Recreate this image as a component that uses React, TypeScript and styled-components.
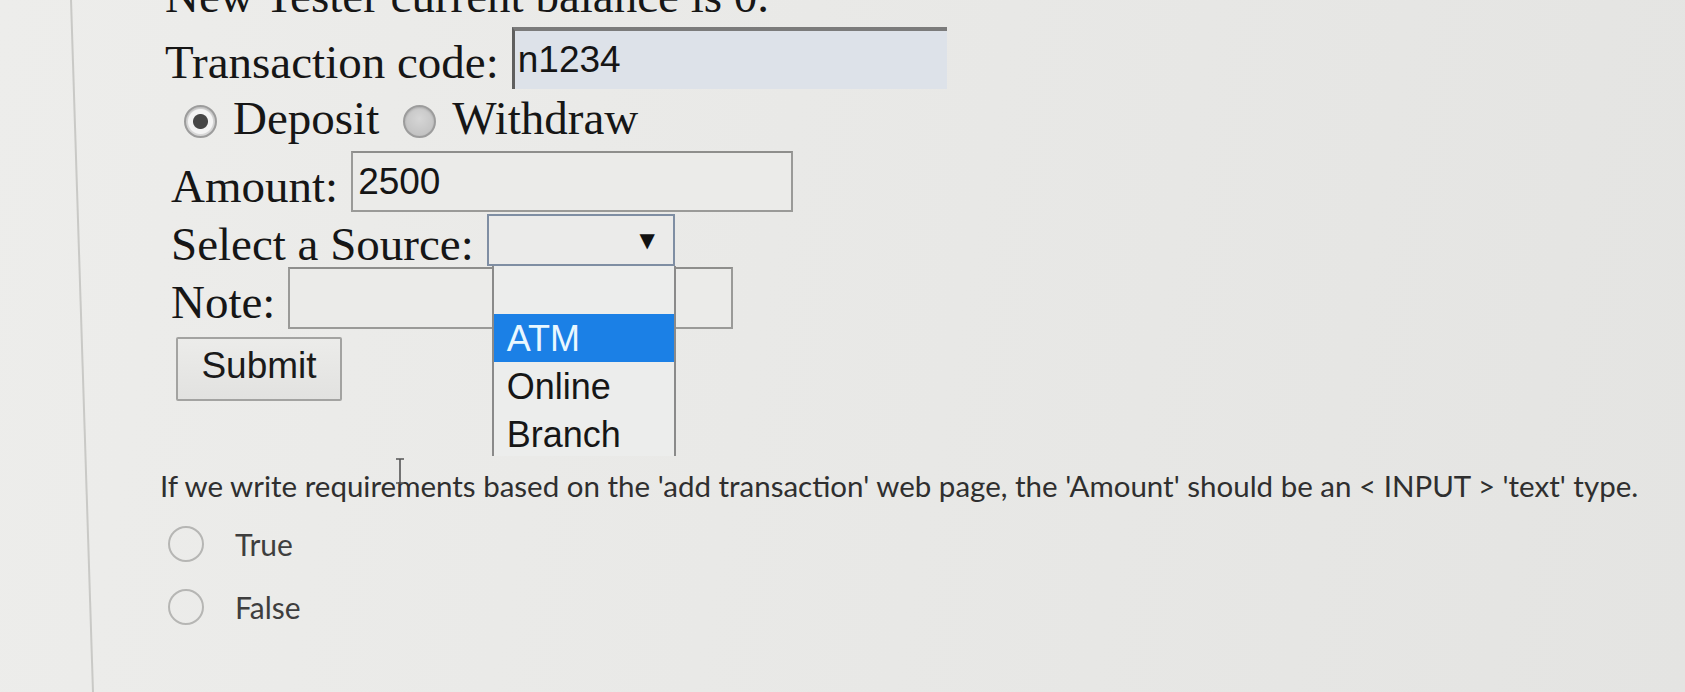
import React from "react";
import styled, { createGlobalStyle } from "styled-components";

const GlobalStyle = createGlobalStyle`
  html, body {
    margin: 0;
    padding: 0;
    width: 1685px;
    height: 692px;
    overflow: hidden;
    background: #e9e9e7;
  }
  * { box-sizing: border-box; }
`;

const Screen = styled.div`
  position: relative;
  display: flex;
  width: 1685px;
  height: 692px;
  overflow: hidden;
  background: linear-gradient(100deg, #ededeb 0%, #e9e9e7 45%, #e4e4e2 100%);

  /* the bezel edge of the photographed page, slightly slanted */
  &::after {
    content: "";
    position: absolute;
    left: 70px;
    top: 0;
    width: 2px;
    height: 700px;
    background: #c9c9c6;
    transform-origin: top left;
    transform: rotate(-1.82deg);
  }
`;

const Gutter = styled.div`
  width: 73px;
  flex-shrink: 0;
`;

const Main = styled.div`
  flex: 1;
  padding-left: 87px;
  display: flex;
  flex-direction: column;
`;

const Shot = styled.div`
  display: flex;
  flex-direction: column;
  padding-left: 5px;
  font-family: "Liberation Serif", "Times New Roman", serif;
  font-size: 47px;
  color: #161616;
`;

const Row = styled.div<{ $top: number; $height: number; $indent?: number }>`
  display: flex;
  align-items: center;
  margin-top: ${(p) => p.$top}px;
  height: ${(p) => p.$height}px;
  padding-left: ${(p) => p.$indent ?? 0}px;
  gap: 13px;
  position: relative;
`;

const Balance = styled.div`
  margin-top: -27px;
  height: 46px;
  line-height: 46px;
  white-space: nowrap;
`;

const Label = styled.span`
  line-height: 46px;
  margin-top: 8px;
  white-space: nowrap;
`;

const TextBox = styled.div<{ $width: number; $filled?: boolean }>`
  width: ${(p) => p.$width}px;
  height: 100%;
  display: flex;
  align-items: center;
  padding-left: ${(p) => (p.$filled ? 3 : 5)}px;
  font-family: "Liberation Sans", Arial, sans-serif;
  font-size: 37px;
  color: #151515;
  background: ${(p) => (p.$filled ? "#dde2e9" : "#ebebe9")};
  border: ${(p) => (p.$filled ? "none" : "2px solid #9a9a98")};
  border-top: ${(p) => (p.$filled ? "4px solid #7b7b7b" : "2px solid #8e8e8c")};
  border-left: ${(p) => (p.$filled ? "3px solid #5f5f5f" : "2px solid #9a9a98")};
`;

const RadioGroup = styled.div<{ $gap?: number }>`
  display: flex;
  align-items: center;
  height: 100%;
  line-height: 55px;
  margin-left: ${(p) => p.$gap ?? 0}px;
`;

const RadioDot = styled.span<{ $checked?: boolean }>`
  width: 33px;
  height: 33px;
  border-radius: 50%;
  margin: 5px 16px 0 14px;
  flex-shrink: 0;
  border: 2px solid #9c9c9c;
  background: ${(p) =>
    p.$checked
      ? "radial-gradient(circle, #474747 0 7px, #f4f4f4 8px 12px, #d8d8d8 13px)"
      : "radial-gradient(circle at 50% 40%, #d6d6d6 0, #c4c4c4 70%, #b8b8b8 100%)"};
  box-shadow: inset 0 1px 2px rgba(0, 0, 0, 0.15);
`;

const SelectWrap = styled.div`
  position: relative;
  width: 188px;
  height: 100%;
`;

const SelectBox = styled.div`
  width: 100%;
  height: 100%;
  border: 2px solid #7f8ea3;
  background: #ebebea;
  display: flex;
  align-items: center;
  justify-content: flex-end;
  padding-right: 18px;
`;

const Caret = styled.span`
  font-family: "DejaVu Sans", sans-serif;
  font-size: 20px;
  color: #111;
`;

const DropList = styled.div`
  position: absolute;
  top: 100%;
  left: 5px;
  width: 184px;
  height: 190px;
  overflow: hidden;
  z-index: 2;
  background: #ecedec;
  border-left: 2px solid #8a8a8a;
  border-right: 2px solid #8a8a8a;
  font-family: "Liberation Sans", Arial, sans-serif;
  font-size: 36px;
`;

const DropItem = styled.div<{ $active?: boolean }>`
  height: 48px;
  line-height: 50px;
  padding-left: 13px;
  color: ${(p) => (p.$active ? "#e9f7ff" : "#161616")};
  background: ${(p) => (p.$active ? "#1b80e6" : "transparent")};
`;

const SubmitButton = styled.button`
  width: 166px;
  height: 100%;
  margin-left: 11px;
  font-family: "Liberation Sans", Arial, sans-serif;
  font-size: 37px;
  color: #1a1a1a;
  background: linear-gradient(#ececea, #e2e2e0);
  border: 2px solid #a3a3a1;
  border-radius: 2px;
  padding: 0 0 6px;
`;

const Question = styled.div`
  position: relative;
  margin-top: 66px;
  font-family: Lato, "Open Sans", sans-serif;
  font-size: 29.5px;
  line-height: 38px;
  color: #2f2f2f;
  white-space: nowrap;
`;

const Cursor = styled.svg`
  position: absolute;
  left: 234px;
  top: -9px;
`;

const Option = styled.div<{ $top: number }>`
  display: flex;
  align-items: center;
  height: 40px;
  margin-top: ${(p) => p.$top}px;
  margin-left: 8px;
  font-family: Lato, "Open Sans", sans-serif;
  font-size: 30px;
  color: #3e3e3e;
`;

const OptionCircle = styled.span`
  width: 36px;
  height: 36px;
  border-radius: 50%;
  border: 2px solid #b6b6b4;
  margin-right: 31px;
`;

export default function App() {
  return (
    <>
      <GlobalStyle />
      <Screen>
        <Gutter />
        <Main>
          <Shot>
            <Balance>New Tester current balance is 0.</Balance>
            <Row $top={8} $height={62}>
              <Label>Transaction code:</Label>
              <TextBox $width={435} $filled>
                n1234
              </TextBox>
            </Row>
            <Row $top={2} $height={55} $indent={5}>
              <RadioGroup>
                <RadioDot $checked />
                Deposit
              </RadioGroup>
              <RadioGroup $gap={-13}>
                <RadioDot style={{ marginLeft: 24 }} />
                Withdraw
              </RadioGroup>
            </Row>
            <Row $top={5} $height={61} $indent={6}>
              <Label>Amount:</Label>
              <TextBox $width={442}>2500</TextBox>
            </Row>
            <Row $top={2} $height={52} $indent={6}>
              <Label>Select a Source:</Label>
              <SelectWrap>
                <SelectBox>
                  <Caret>▼</Caret>
                </SelectBox>
                <DropList>
                  <DropItem />
                  <DropItem $active>ATM</DropItem>
                  <DropItem>Online</DropItem>
                  <DropItem>Branch</DropItem>
                </DropList>
              </SelectWrap>
            </Row>
            <Row $top={1} $height={62} $indent={6}>
              <Label>Note:</Label>
              <TextBox $width={445} />
            </Row>
            <Row $top={8} $height={64}>
              <SubmitButton>Submit</SubmitButton>
            </Row>
          </Shot>
          <Question>
            If we write requirements based on the 'add transaction' web page,
            the 'Amount' should be an &lt; INPUT &gt; 'text' type.
            <Cursor width="12" height="26" viewBox="0 0 12 26">
              <path
                d="M2 1h8M6 1v24M2 25h8"
                stroke="#555"
                strokeWidth="1.6"
                fill="none"
              />
            </Cursor>
          </Question>
          <Option $top={19}>
            <OptionCircle />
            True
          </Option>
          <Option $top={23}>
            <OptionCircle />
            False
          </Option>
        </Main>
      </Screen>
    </>
  );
}
